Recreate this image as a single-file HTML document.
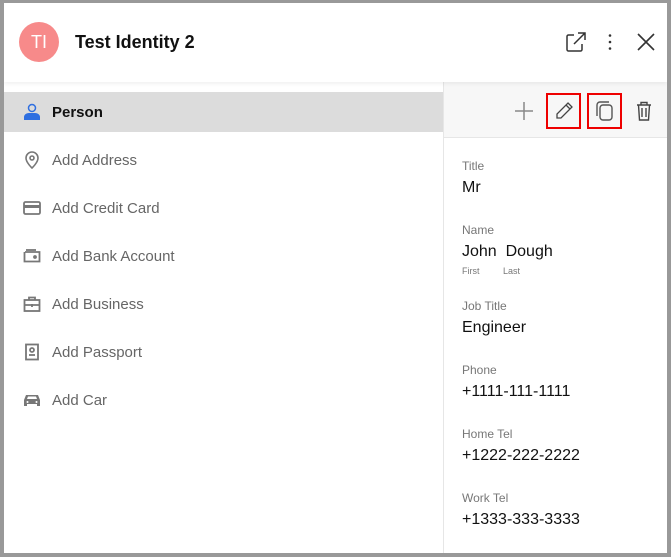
<!DOCTYPE html>
<html><head><style>
*{margin:0;padding:0;box-sizing:border-box}
body{width:671px;height:557px;background:#999;font-family:"Liberation Sans",Arial,sans-serif;position:relative;overflow:hidden}
.win{position:absolute;left:4px;top:3px;width:663px;height:550px;background:#fff;overflow:hidden}
.hdr{position:absolute;left:0;top:0;width:663px;height:79px;background:#fff;box-shadow:0 2px 4px rgba(0,0,0,0.06);z-index:2}
.av{position:absolute;left:15px;top:19px;width:40px;height:40px;border-radius:50%;background:#f78a8a;color:#fff;font-size:18px;line-height:40px;text-align:center}
.title{position:absolute;left:71px;top:29px;font-size:18px;font-weight:bold;color:#111}
.item{position:absolute;left:0;width:439px;height:40px;font-size:15px;color:#666}
.item span{position:absolute;left:48px;top:12px}
.item svg{position:absolute;left:19px;top:11px}
.sel{background:#dcdcdc;color:#111;font-weight:bold}
.rp{position:absolute;left:439px;top:79px;width:224px;height:471px;border-left:1px solid #e6e6e6}
.tb{position:absolute;left:0;top:0;width:224px;height:56px;background:#f7f7f7;border-bottom:1px solid #e6e6e6}
.lab{position:absolute;left:18px;font-size:12px;color:#777}
.val{position:absolute;left:18px;font-size:16px;color:#111}
.sm{position:absolute;font-size:9px;color:#777}
.box{position:absolute;top:11px;width:35px;height:36px;border:2px solid #e00}
</style></head><body>
<div class="win">
<div class="hdr">
<div class="av">TI</div>
<div class="title">Test Identity 2</div>
<svg style="position:absolute;left:561px;top:28px" width="22" height="22" viewBox="0 0 22 22" fill="none" stroke="#333" stroke-width="1.5"><path d="M9 4H3.5a1.5 1.5 0 0 0-1.5 1.5v13A1.5 1.5 0 0 0 3.5 20h12a1.5 1.5 0 0 0 1.5-1.5V13"/><path d="M13 2h7v7M20 2 9 13"/></svg>
<svg style="position:absolute;left:603px;top:30px" width="6" height="18"><circle cx="3" cy="2.5" r="1.3" fill="#333"/><circle cx="3" cy="9" r="1.3" fill="#333"/><circle cx="3" cy="15.5" r="1.3" fill="#333"/></svg>
<svg style="position:absolute;left:632px;top:29px" width="20" height="20" stroke="#333" stroke-width="1.6"><path d="M2 2L18 18M18 2L2 18"/></svg>
</div>
<div class="item sel" style="top:89px"><svg width="18" height="18" viewBox="0 0 18 18"><circle cx="9" cy="5" r="3.5" fill="none" stroke="#2f6fe0" stroke-width="1.5"/><path d="M1 17v-3c0-2 2-4 5-4h6c3 0 5 2 5 4v3z" fill="#2f6fe0"/></svg><span>Person</span></div>
<div class="item" style="top:137px"><svg width="18" height="18" viewBox="0 0 18 18" fill="none" stroke="#777" stroke-width="1.6"><path d="M9 17s-6-5.5-6-10a6 6 0 0 1 12 0c0 4.5-6 10-6 10z"/><circle cx="9" cy="7" r="2"/></svg><span>Add Address</span></div>
<div class="item" style="top:185px"><svg width="18" height="18" viewBox="0 0 18 18"><rect x="1" y="3" width="16" height="12" rx="1.5" fill="none" stroke="#777" stroke-width="1.8"/><rect x="1" y="6" width="16" height="3" fill="#777"/></svg><span>Add Credit Card</span></div>
<div class="item" style="top:233px"><svg width="18" height="18" viewBox="0 0 18 18" fill="none" stroke="#777" stroke-width="1.8"><path d="M1.5 5v9.5h15V5H2"/><path d="M3 3h10"/><circle cx="12" cy="10" r="1" fill="#777"/></svg><span>Add Bank Account</span></div>
<div class="item" style="top:281px"><svg width="18" height="18" viewBox="0 0 18 18" fill="none" stroke="#777" stroke-width="1.8"><rect x="1.5" y="5" width="15" height="11"/><path d="M6 5V2.5h6V5M1.5 10h15M9 9v3"/></svg><span>Add Business</span></div>
<div class="item" style="top:329px"><svg width="18" height="18" viewBox="0 0 18 18" fill="none" stroke="#777" stroke-width="1.8"><rect x="3" y="1.5" width="12" height="15"/><circle cx="9" cy="7" r="2"/><path d="M6 12h6"/></svg><span>Add Passport</span></div>
<div class="item" style="top:377px"><svg width="18" height="18" viewBox="0 0 18 18"><path d="M1 9l2-5h12l2 5v6h-3v-2H4v2H1z" fill="#777"/><path d="M4 8l1-2.5h8L14 8z" fill="#fff"/><circle cx="4.5" cy="11" r="1" fill="#fff"/><circle cx="13.5" cy="11" r="1" fill="#fff"/></svg><span>Add Car</span></div>
<div class="rp">
<div class="tb">
<svg style="position:absolute;left:70px;top:19px" width="20" height="20" stroke="#888" stroke-width="1.5"><path d="M10 1v18M1 10h18"/></svg>
<div class="box" style="left:102px"></div>
<svg style="position:absolute;left:110px;top:19px" width="20" height="20" viewBox="0 0 20 20" fill="none" stroke="#444" stroke-width="1.3"><path d="M14 2l4 4L7 17H3v-4z M12 4l4 4"/></svg>
<div class="box" style="left:143px"></div>
<svg style="position:absolute;left:151px;top:18px" width="20" height="22" viewBox="0 0 20 22" fill="none" stroke="#555" stroke-width="1.4"><rect x="5" y="5" width="12" height="15" rx="3"/><path d="M2 16V5a3 3 0 0 1 3-3h9"/></svg>
<svg style="position:absolute;left:192px;top:19px" width="16" height="20" viewBox="0 0 16 20" fill="none" stroke="#444" stroke-width="1.4"><path d="M1 4h14M5 4V1.5h6V4M2.5 4l1 15h9l1-15M6 7v9M10 7v9"/></svg>
</div>
<div class="lab" style="top:77px">Title</div><div class="val" style="top:97px">Mr</div>
<div class="lab" style="top:141px">Name</div><div class="val" style="top:161px">John&nbsp; Dough</div>
<div class="sm" style="left:18px;top:184px">First</div><div class="sm" style="left:59px;top:184px">Last</div>
<div class="lab" style="top:217px">Job Title</div><div class="val" style="top:237px">Engineer</div>
<div class="lab" style="top:281px">Phone</div><div class="val" style="top:301px">+1111-111-1111</div>
<div class="lab" style="top:345px">Home Tel</div><div class="val" style="top:365px">+1222-222-2222</div>
<div class="lab" style="top:409px">Work Tel</div><div class="val" style="top:429px">+1333-333-3333</div>
</div>
</div>
</body></html>
